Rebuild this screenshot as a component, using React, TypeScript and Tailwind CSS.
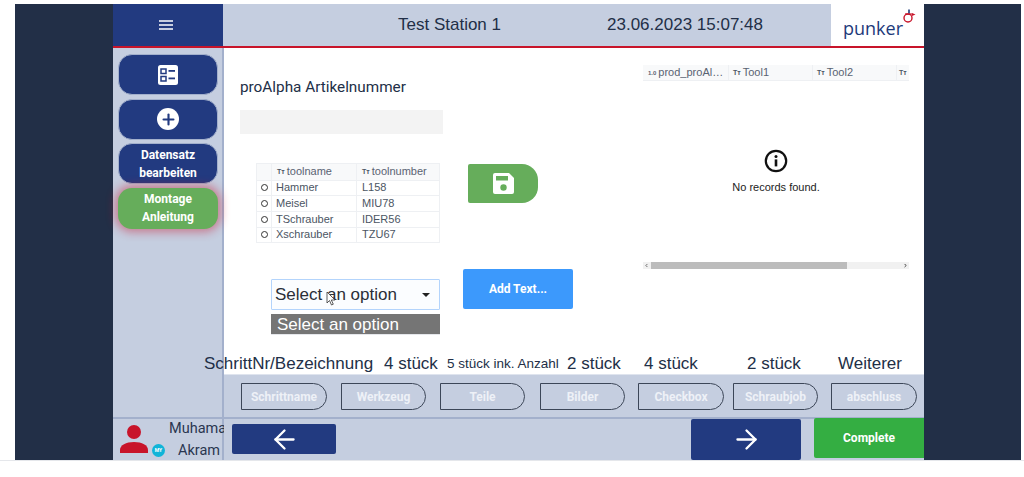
import React from "react";
import { ArrowLeft, ArrowRight, Plus, ChevronRight } from "lucide-react";

const roboto = "font-['Roboto',sans-serif]";
const arial = "font-['Liberation_Sans',Arial,sans-serif]";

const Tt = () => <span className="mr-[2px] text-[7px] font-bold leading-none text-[#4b5563]">Tт</span>;

const rows = [
  ["Hammer", "L158"],
  ["Meisel", "MIU78"],
  ["TSchrauber", "IDER56"],
  ["Xschrauber", "TZU67"],
];

const labels = [
  { t: "SchrittNr/Bezeichnung", w: "w-[180px]", c: "text-[17px]" },
  { t: "4 stück", w: "w-[63px]", c: "text-[17px]" },
  { t: "5 stück ink. Anzahl", w: "w-[120px]", c: "mt-[2px] text-[13.5px]" },
  { t: "2 stück", w: "w-[77px]", c: "text-[17px]" },
  { t: "4 stück", w: "w-[103px]", c: "text-[17px]" },
  { t: "2 stück", w: "w-[91px]", c: "text-[17px]" },
  { t: "Weiterer", w: "w-[66px]", c: "text-[17px]" },
];

const steps: [string, string][] = [
  ["Schrittname", "w-[86px] ml-[17px]"],
  ["Werkzeug", "w-[85px] ml-[14px]"],
  ["Teile", "w-[85px] ml-[14px]"],
  ["Bilder", "w-[85px] ml-[15px]"],
  ["Checkbox", "w-[86px] ml-[13px]"],
  ["Schraubjob", "w-[85px] ml-[9px]"],
  ["abschluss", "w-[86px] ml-[13px]"],
];

function ChecklistIcon() {
  return (
    <svg width="20" height="20" viewBox="0 0 20 20">
      <rect width="20" height="20" rx="2.5" fill="#fff" />
      <rect x="3" y="4" width="5" height="4.5" fill="none" stroke="#223a80" strokeWidth="1.5" />
      <rect x="3" y="11.5" width="5" height="4.5" fill="none" stroke="#223a80" strokeWidth="1.5" />
      <rect x="10.5" y="5" width="6.5" height="1.8" fill="#223a80" />
      <rect x="10.5" y="12.5" width="6.5" height="1.8" fill="#223a80" />
    </svg>
  );
}

function SaveIcon() {
  return (
    <svg width="21" height="21" viewBox="0 0 21 21">
      <path d="M2 0h14l5 5v14a2 2 0 0 1-2 2H2a2 2 0 0 1-2-2V2a2 2 0 0 1 2-2z" fill="#fff" />
      <rect x="3" y="3" width="12" height="4.5" fill="#66ad5b" />
      <circle cx="10.5" cy="14.5" r="3.2" fill="#66ad5b" />
    </svg>
  );
}

function InfoIcon() {
  return (
    <svg width="24" height="24" viewBox="0 0 24 24">
      <circle cx="12" cy="12" r="10.2" fill="none" stroke="#111" strokeWidth="2.2" />
      <rect x="10.7" y="10.4" width="2.6" height="7" fill="#111" />
      <circle cx="12" cy="7.6" r="1.5" fill="#111" />
    </svg>
  );
}

function UserIcon() {
  return (
    <svg width="28" height="28" viewBox="0 0 28 28">
      <circle cx="14" cy="7" r="7" fill="#c8142a" />
      <path d="M0 28v-3c0-5 6-8 14-8s14 3 14 8v3z" fill="#c8142a" />
    </svg>
  );
}

function HamburgerIcon() {
  return (
    <svg width="14" height="10" viewBox="0 0 14 10">
      <path d="M0 1h14M0 5h14M0 9h14" stroke="#fff" strokeWidth="1.5" />
    </svg>
  );
}

function Logo() {
  return (
    <div className="flex h-[42px] w-[93px] items-center bg-white pl-[12px]">
      <span className="relative mt-[6px] font-['Open_Sans',sans-serif] text-[18px] leading-none text-[#1d3a7a]">
        punker
        <svg className="absolute left-[59px] top-[-10px]" width="14" height="15" viewBox="0 0 14 15">
          <circle cx="6" cy="9" r="4" fill="none" stroke="#c8142a" strokeWidth="1.4" />
          <path d="M7 0.5v4" stroke="#1d3a7a" strokeWidth="1.6" />
          <path d="M10 4l3.5 1.5L10 7z" fill="#c8142a" />
          <path d="M3 5h7" stroke="#c8142a" strokeWidth="1.2" />
        </svg>
      </span>
    </div>
  );
}

function SideButton({ children, green }: { children: React.ReactNode; green?: boolean }) {
  return (
    <div
      className={`flex h-[41px] w-[100px] flex-col items-center justify-center rounded-[14px] text-center text-[12px] font-bold leading-[18px] text-white ${
        green
          ? "bg-[#66ad5b] shadow-[0_0_10px_3px_rgba(200,20,42,0.45)]"
          : "border border-[#a3b0cc] bg-[#223a80]"
      }`}
    >
      {children}
    </div>
  );
}

export default function App() {
  return (
    <div className={`h-[477px] w-[1024px] overflow-hidden bg-white pt-[4px] ${roboto}`}>
      <div className="ml-[15px] h-[456px] w-[1006px] bg-[#222f47] px-[98px]">
        <div className="flex h-full w-[811px] flex-col bg-white">
          {/* Header */}
          <div className="flex h-[44px] shrink-0 border-b-[2px] border-[#c8142a]">
            <div className="flex h-[42px] w-[110px] items-center justify-center bg-[#223a80] pr-[4px]">
              <HamburgerIcon />
            </div>
            <div className={`flex h-[42px] flex-1 items-center bg-[#c5cee0] text-[17px] text-[#222f47] ${arial}`}>
              <span className="ml-[175px]">Test Station 1</span>
              <span className="ml-[106px]">23.06.2023 15:07:48</span>
            </div>
            <Logo />
          </div>

          <div className="flex min-h-0 flex-1">
            {/* Sidebar */}
            <div className="flex w-[111px] shrink-0 flex-col border-r-[2px] border-[#a3b0cc] bg-[#c5cee0]">
              <div className="flex flex-1 flex-col items-start gap-[3.5px] pl-[5px] pt-[6px]">
                <SideButton>
                  <ChecklistIcon />
                </SideButton>
                <SideButton>
                  <div className="flex h-[22px] w-[22px] items-center justify-center rounded-full bg-white text-[#223a80]">
                    <Plus size={17} strokeWidth={3} />
                  </div>
                </SideButton>
                <SideButton>
                  <span>Datensatz</span>
                  <span>bearbeiten</span>
                </SideButton>
                <SideButton green>
                  <span>Montage</span>
                  <span>Anleitung</span>
                </SideButton>
              </div>
              <div className="flex h-[43px] border-t-[2px] border-[#a3b0cc] pl-[7px] pt-[6px]">
                <div className="relative h-[28px] w-[28px] shrink-0">
                  <UserIcon />
                  <span className="absolute left-[32px] top-[19px] flex h-[13px] w-[13px] items-center justify-center rounded-full bg-[#10b4d8] text-[5px] font-bold text-white">
                    MY
                  </span>
                </div>
                <div className="ml-[14px] mt-[-7px] flex w-[61px] flex-col text-[14.5px] leading-[22px] text-[#2a3650]">
                  <span className="ml-[7px] whitespace-nowrap">Muhama</span>
                  <span className="ml-[16px] whitespace-nowrap">Akram</span>
                </div>
              </div>
            </div>

            {/* Right */}
            <div className="flex min-w-0 flex-1 flex-col">
              <div className="flex h-[304px] shrink-0">
                <div className="w-[419px] shrink-0 pl-[16px]">
                  <div className="mt-[28px] text-[15.3px] font-normal leading-[22px] text-[#222f47]">proAlpha Artikelnummer</div>
                  <div className="mt-[12px] h-[24px] w-[203px] bg-[#f3f3f3]" />
                  <div className="mt-[29px] flex items-start pl-[16px]">
                    <div className={`w-[184px] border border-[#eef0f3] text-[11px] leading-[15px] text-[#4b5563] ${arial}`}>
                      <div className="flex h-[15.5px] bg-[#f8f9fa] text-[#5a6372]">
                        <div className="w-[15px] border-r border-[#eef0f3]" />
                        <div className="flex w-[85px] items-center border-r border-[#eef0f3] pl-[5px]"><Tt />toolname</div>
                        <div className="flex flex-1 items-center pl-[5px]"><Tt />toolnumber</div>
                      </div>
                      {rows.map(([a, b]) => (
                        <div key={a} className="flex h-[15.7px] items-center border-t border-[#eef0f3]">
                          <div className="flex h-full w-[15px] items-center justify-center border-r border-[#eef0f3]">
                            <span className="h-[7px] w-[7px] rounded-full border border-[#333]" />
                          </div>
                          <div className="w-[85px] border-r border-[#eef0f3] pl-[4px]">{a}</div>
                          <div className="flex-1 pl-[5px]">{b}</div>
                        </div>
                      ))}
                    </div>
                    <div className="ml-[28px] mt-[1px] flex h-[39px] w-[70px] items-center justify-center rounded-r-[16px] rounded-l-[2px] bg-[#66ad5b]">
                      <SaveIcon />
                    </div>
                  </div>
                  <div className="mt-[26px] flex items-start pl-[31px]">
                    <div className={`mt-[10px] w-[169px] ${arial}`}>
                      <div className="relative flex h-[31px] items-center justify-between rounded-[1px] border border-[#b3d4fc] bg-[#fbfdff] pl-[3px] pr-[9px] text-[17px] text-[#2a2f38]">
                        Select an option
                        <span className="h-0 w-0 border-x-[4px] border-t-[4px] border-x-transparent border-t-[#222]" />
                        <svg className="absolute left-[54px] top-[11px]" width="10" height="15" viewBox="0 0 10 15">
                          <path d="M1 1v11l2.5-2.5L5.5 14l1.8-.8-2-4.2H9z" fill="#fff" stroke="#333" strokeWidth="0.8" />
                        </svg>
                      </div>
                      <div className="mt-[4px] flex h-[21px] items-center border-b border-[#e5e7eb] bg-[#757575] pl-[6px] text-[17px] text-white">
                        Select an option
                      </div>
                    </div>
                    <div className="ml-[23px] flex h-[40px] w-[110px] items-center justify-center rounded-[2px] bg-[#3c99fc] text-[12px] font-bold text-white">
                      Add Text...
                    </div>
                  </div>
                </div>

                <div className="w-[266px] shrink-0 pt-[17px]">
                  <div className={`flex h-[16px] overflow-hidden border-b border-[#eef0f3] bg-[#f8f9fa] text-[11px] leading-[15px] text-[#5a6372] ${arial}`}>
                    <div className="flex w-[86px] shrink-0 items-center whitespace-nowrap border-r border-[#eef0f3] pl-[5px]">
                      <span className="mr-[2px] text-[6px] font-bold leading-none">1.0</span>prod_proAl…
                    </div>
                    <div className="flex w-[84px] shrink-0 items-center border-r border-[#eef0f3] pl-[4px]"><Tt />Tool1</div>
                    <div className="flex w-[84px] shrink-0 items-center border-r border-[#eef0f3] pl-[4px]"><Tt />Tool2</div>
                    <div className="flex flex-1 items-center pl-[2px]"><Tt /></div>
                  </div>
                  <div className="mt-[68px] flex flex-col items-center">
                    <InfoIcon />
                    <span className={`mt-[8px] text-[11px] leading-[13px] text-[#222] ${arial}`}>No records found.</span>
                  </div>
                  <div className="mt-[68px] flex h-[7px] items-center bg-[#f1f1f1] px-[1px]">
                    <ChevronRight size={5} className="rotate-180 text-[#555]" strokeWidth={4} />
                    <div className="ml-[2px] h-[7px] w-[196px] bg-[#bcbcbc]" />
                    <div className="flex-1" />
                    <ChevronRight size={5} className="text-[#222]" strokeWidth={4} />
                  </div>
                </div>
              </div>

              {/* Labels */}
              <div className={`ml-[-20px] flex h-[22px] shrink-0 items-center whitespace-nowrap pt-[1px] text-[#222f47] ${arial}`}>
                {labels.map((l, i) => (
                  <span key={i} className={`${l.w} ${l.c} shrink-0`}>{l.t}</span>
                ))}
              </div>

              {/* Step band */}
              <div className="flex h-[45px] shrink-0 items-start border-t border-[#dfe4ee] border-b-[2px] border-b-[#a3b0cc] bg-[#c5cee0] pt-[8px]">
                {steps.map(([t, c]) => (
                  <div
                    key={t}
                    className={`${c} flex h-[27px] shrink-0 items-center justify-center rounded-r-full border border-[#3c4658] text-[12px] font-bold text-[#eef1f7]`}
                  >
                    {t}
                  </div>
                ))}
              </div>

              {/* Footer */}
              <div className="flex h-[41px] shrink-0 items-start bg-[#c5cee0]">
                <div className="ml-[8px] mt-[5px] flex h-[30px] w-[104px] items-center justify-center rounded-[2px] bg-[#223a80] text-white">
                  <ArrowLeft size={31} strokeWidth={1.8} />
                </div>
                <div className="ml-[355px] flex h-[41px] w-[110px] items-center justify-center rounded-[2px] bg-[#223a80] text-white">
                  <ArrowRight size={31} strokeWidth={1.8} />
                </div>
                <div className="relative ml-[13px] mt-[-1px] flex h-[40px] w-[110px] items-center justify-center rounded-l-[2px] bg-[#34ae42] text-[12px] font-bold text-white">
                  Complete
                </div>
              </div>
            </div>
          </div>
        </div>
      </div>
      <div className="h-[1px] w-full bg-[#e5e7eb]" />
    </div>
  );
}
